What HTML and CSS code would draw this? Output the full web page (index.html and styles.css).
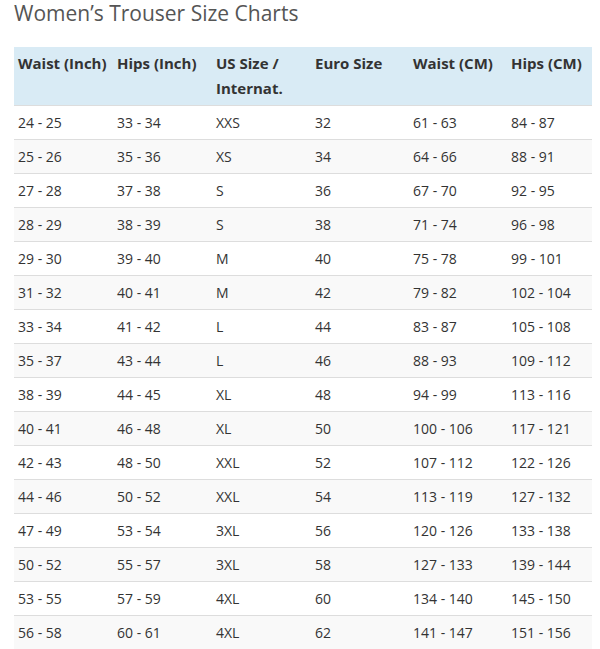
FILE: index.html
```html
<!DOCTYPE html>
<html>
<head>
<meta charset="utf-8">
<link rel="stylesheet" href="styles.css">
</head>
<body>
<div class="page">
  <h2 class="title">Women’s Trouser Size Charts</h2>
  <table class="chart">
    <colgroup>
      <col class="c1"><col class="c2"><col class="c3"><col class="c4"><col class="c5"><col class="c6">
    </colgroup>
    <thead>
      <tr><th>Waist (Inch)</th><th>Hips (Inch)</th><th>US Size / Internat.</th><th>Euro Size</th><th>Waist (CM)</th><th>Hips (CM)</th></tr>
    </thead>
    <tbody>
      <tr><td>24 - 25</td><td>33 - 34</td><td>XXS</td><td>32</td><td>61 - 63</td><td>84 - 87</td></tr>
      <tr><td>25 - 26</td><td>35 - 36</td><td>XS</td><td>34</td><td>64 - 66</td><td>88 - 91</td></tr>
      <tr><td>27 - 28</td><td>37 - 38</td><td>S</td><td>36</td><td>67 - 70</td><td>92 - 95</td></tr>
      <tr><td>28 - 29</td><td>38 - 39</td><td>S</td><td>38</td><td>71 - 74</td><td>96 - 98</td></tr>
      <tr><td>29 - 30</td><td>39 - 40</td><td>M</td><td>40</td><td>75 - 78</td><td>99 - 101</td></tr>
      <tr><td>31 - 32</td><td>40 - 41</td><td>M</td><td>42</td><td>79 - 82</td><td>102 - 104</td></tr>
      <tr><td>33 - 34</td><td>41 - 42</td><td>L</td><td>44</td><td>83 - 87</td><td>105 - 108</td></tr>
      <tr><td>35 - 37</td><td>43 - 44</td><td>L</td><td>46</td><td>88 - 93</td><td>109 - 112</td></tr>
      <tr><td>38 - 39</td><td>44 - 45</td><td>XL</td><td>48</td><td>94 - 99</td><td>113 - 116</td></tr>
      <tr><td>40 - 41</td><td>46 - 48</td><td>XL</td><td>50</td><td>100 - 106</td><td>117 - 121</td></tr>
      <tr><td>42 - 43</td><td>48 - 50</td><td>XXL</td><td>52</td><td>107 - 112</td><td>122 - 126</td></tr>
      <tr><td>44 - 46</td><td>50 - 52</td><td>XXL</td><td>54</td><td>113 - 119</td><td>127 - 132</td></tr>
      <tr><td>47 - 49</td><td>53 - 54</td><td>3XL</td><td>56</td><td>120 - 126</td><td>133 - 138</td></tr>
      <tr><td>50 - 52</td><td>55 - 57</td><td>3XL</td><td>58</td><td>127 - 133</td><td>139 - 144</td></tr>
      <tr><td>53 - 55</td><td>57 - 59</td><td>4XL</td><td>60</td><td>134 - 140</td><td>145 - 150</td></tr>
      <tr><td>56 - 58</td><td>60 - 61</td><td>4XL</td><td>62</td><td>141 - 147</td><td>151 - 156</td></tr>
    </tbody>
  </table>
</div>
</body>
</html>
```
FILE: styles.css
```css
html, body {
  margin: 0;
  padding: 0;
  background: #fff;
}
body {
  font-family: "Open Sans", "Liberation Sans", sans-serif;
  color: #333;
}
.page {
  padding: 0 8px 0 14px;
}
.title {
  margin: 0;
  font-size: 21px;
  font-weight: 400;
  line-height: 26px;
  color: #555;
  padding-bottom: 21px;
}
.chart {
  width: 578px;
  border-collapse: collapse;
  table-layout: fixed;
  font-size: 14px;
}
.c1, .c2, .c3 { width: 99px; }
.c4, .c5 { width: 98px; }
.c6 { width: 85px; }
.chart th {
  background: #d9ebf5;
  text-align: left;
  vertical-align: top;
  font-size: 15px;
  font-weight: 700;
  line-height: 25px;
  padding: 4px 4px 4px 4px;
  color: #333;
}
.chart td {
  line-height: 25px;
  padding: 4px 4px 4px 4px;
  border-top: 1px solid #ddd;
  color: #333;
}
.chart tbody tr:nth-child(even) td {
  background: #f9f9f9;
}
```
